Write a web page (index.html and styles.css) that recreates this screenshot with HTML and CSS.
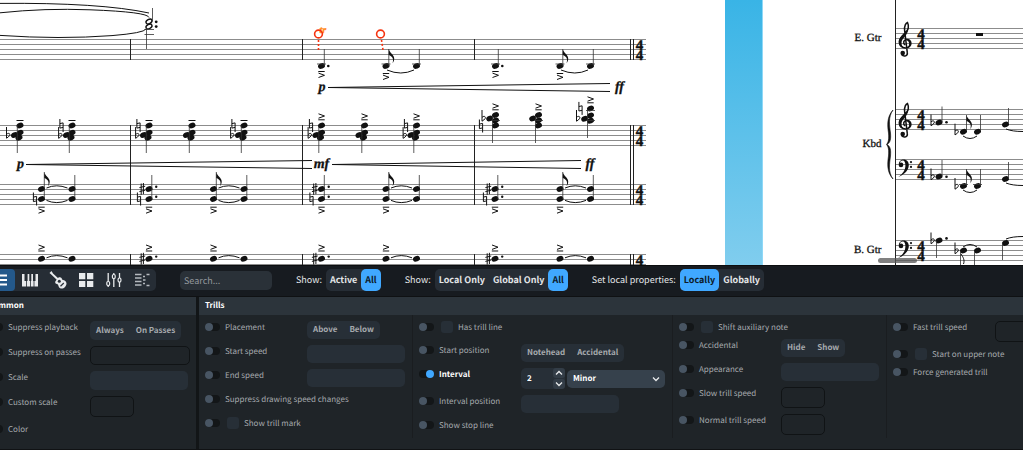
FILE: index.html
```html
<!DOCTYPE html>
<html lang="en">
<head>
<meta charset="UTF-8">
<title>Score – Properties</title>
<meta name="viewport" content="width=device-width,initial-scale=1.0">
<link rel="stylesheet" href="styles.css">
</head>
<body>

<!-- Score -->
<main class="score">
<svg class="music" viewBox="0 0 1023 265" preserveAspectRatio="xMinYMin slice" role="img" aria-label="Score">
  <defs>
    <linearGradient id="sky" x1="0" y1="0" x2="0" y2="1"><stop offset="0" stop-color="#39b4e6"/><stop offset="1" stop-color="#80cdee"/></linearGradient>
    <ellipse id="head" rx="3.6" ry="2.7" transform="rotate(-22)"/>
    <path id="flat" d="M-2-8V3.2M-2-.6C0-2.6 2-1.4 1.2.4C.6 1.6-.8 2.6-2 3.2" class="thin"/>
    <path id="natural" d="M-1.6-6.5V2.6L1.6 1.9M1.6 6.5V-2.6L-1.6-1.9" class="thin"/>
    <path id="sharp" d="M-1-5.5V5.8M1.2-6V5.2M-2.8-1.4L3-2.8M-2.8 2.6L3 1.2" class="thin"/>
    <path id="accent" d="M-3-2.2L3 0L-3 2.2M-3.2 3.8H3.2" class="thin"/>
    <path id="accentLow" d="M-3.2-3.8H3.2M-3-2.2L3 0L-3 2.2" class="thin"/>
    <path id="flag" d="M0 0C.6 4 5.4 5.5 5.4 9.5C5.4 11.5 4.6 13 3.8 14.2C5.2 9.5 3.4 7.2 0 6Z"/>
    <path id="staffL" d="M0 0H646M0 5H646M0 10H646M0 15H646M0 20H646" class="staff"/>
    <path id="staffR" d="M895 0H1023M895 5H1023M895 10H1023M895 15H1023M895 20H1023" class="staff"/>
    <g id="four"><text x="0" y="10">4</text><text x="0" y="20">4</text></g>
    <g id="treble">
      <path d="M3 26C5.5 28.8 9.4 27.4 8.8 24.2L6.2 2.6C5.4-3 7.6-5.6 9-6C10.6-2.6 9.8 1.2 7 4C3.6 7.4.8 9.4.8 13.4C.8 17.2 3.8 19.4 7 19.4C10.4 19.4 12.6 17.4 12.4 14.6C12.2 12 10 10.6 7.8 11C5 11.4 4.2 14.8 6.6 16.4" fill="none" stroke="#111" stroke-width="1.5"/>
      <path d="M7 4C3.6 7.4.4 9.4.4 13.8C1.2 17.4 3 19 5.2 19.2C2.6 17 2.4 13 4.4 10.5C6.4 7.7 9.8 4.6 10-.6C9.4 1.2 8.4 2.6 7 4ZM7 19.4C12 19.6 13.6 15 11.6 12.6C10.4 11 8.4 10.8 7.4 11.4C10.4 12 11.4 15 10.2 17.2C9.6 18.6 8.4 19.2 7 19.4Z"/>
      <circle cx="4.2" cy="24.6" r="2.3"/>
    </g>
    <g id="bass">
      <circle cx="3" cy="5.4" r="2.3"/>
      <path d="M.8 5C.8 1.8 3.2 0 5.6 0C9 0 11 2.6 10.8 6C10.4 11.6 5 15.8.2 17.6C4.4 14.4 7.4 11 7.4 6C7.4 3 6.6 1 4.8 1C3 1 1.8 2.2 1.8 4Z"/>
      <circle cx="13" cy="2.6" r="1.1"/><circle cx="13" cy="7.4" r="1.1"/>
    </g>
    <!-- three-note cluster hanging from the top line -->
    <g id="cluster">
      <use href="#head"/><use href="#head" y="7.2"/><use href="#head" x="-5.5" y="9.6"/><use href="#head" x="-1" y="12.2"/>
      <path d="M-2.7 0V27.5" class="stem"/>
    </g>
    <g id="acc"><use href="#natural" x="-10.5"/><use href="#flat" x="-11.4" y="9.6"/></g>
    <g id="dotted3">
      <use href="#head"/><use href="#head" y="10"/><path d="M2.8 10V-14" class="stem"/>
      <use href="#sharp" x="-6.8"/><use href="#natural" x="-10" y="10"/>
      <circle cx="7.2" cy="-2.2" r="1.2"/><circle cx="7.2" cy="7.8" r="1.2"/><use href="#accentLow" y="22"/>
    </g>
    <g id="tied3">
      <use href="#head"/><use href="#head" y="10"/><path d="M2.8 10V-17M33.3 10V-14" class="stem"/><use href="#flag" x="2.8" y="-17"/>
      <use href="#head" x="30.5"/><use href="#head" x="30.5" y="10"/>
      <path d="M5-1Q15-5.4 26-1M5 11.4Q15 15.8 26 11.4" class="tie"/><use href="#accentLow" y="22"/>
    </g>
    <g id="dotted4"><use href="#head"/><use href="#sharp" x="-6.8"/><circle cx="7.2" cy="-2.2" r="1.2"/><use href="#accent" y="-11.6"/></g>
    <g id="tied4"><use href="#head"/><use href="#head" x="30.5"/><path d="M5-1Q15-5.4 26-1" class="tie"/><use href="#accent" y="-11.6"/></g>
    <g id="dotted1"><use href="#head"/><path d="M-4.5-2H4.5M2.8 0V-17" class="stem"/><circle cx="6.8" cy="0" r="1.3"/><use href="#accentLow" y="9.3"/></g>
    <g id="tied1">
      <use href="#head"/><use href="#head" x="30.5"/><path d="M-4.5-2H4.5M26-2H35M2.8 0V-17M33.3 0V-17" class="stem"/>
      <use href="#flag" x="2.8" y="-17"/><path d="M1 4Q15 10 28 4" class="tie"/><use href="#accentLow" y="11.3"/>
    </g>
    <g id="leftCluster"><use href="#head"/><use href="#head" x="-5.8" y="3.4"/><use href="#head" y="5.4"/></g>
  </defs>

  <rect x="725" width="38" height="265" fill="url(#sky)"/>
  <path d="M762.5 0V265" stroke="#8ed8f7"/>

  <use href="#staffL" y="39.5"/><use href="#staffL" y="125.5"/><use href="#staffL" y="184.5"/><use href="#staffL" y="254.5"/>
  <path class="bar" d="M130.5 39V60M302.5 39V60M474.5 39V60M630.5 39V60M633.5 39V60
    M130.5 125V205M302.5 125V205M474.5 125V205M630.5 125V205M633.5 125V205
    M130.5 254V265M302.5 254V265M474.5 254V265M630.5 254V265M633.5 254V265"/>
  <g class="time"><use href="#four" x="639.5" y="39.5"/><use href="#four" x="639.5" y="125.5"/><use href="#four" x="639.5" y="184.5"/><use href="#four" x="639.5" y="254.5"/></g>

  <!-- top staff -->
  <path class="tie" d="M0 3.4Q100 2.5 149 13M0 12.8Q45 8 90 9.8Q148 12 149 17.5M0 35.4Q60 39.5 112 35.6Q144 33 146 29"/>
  <g fill="none" stroke="#111" stroke-width="1.4"><ellipse cx="149" cy="21.5" rx="3.2" ry="2" transform="rotate(-28 149 21.5)"/><ellipse cx="149" cy="26.5" rx="3.2" ry="2" transform="rotate(-28 149 26.5)"/></g>
  <path class="stem" d="M152.5 8V21M146.5 26V49M144.5 29.5H154M144.5 34.5H154"/>
  <circle cx="156.2" cy="21.8" r="1.4"/><circle cx="156.2" cy="26.6" r="1.4"/>
  <use href="#dotted1" x="321.5" y="66"/><use href="#tied1" x="386" y="66"/><use href="#dotted1" x="495.5" y="66"/><use href="#tied1" x="560" y="66"/>
  <path class="thin" d="M328 87.5L610 83.5M328 87.5L610 91.5M26 164.5L312 160.5M26 164.5L312 168.5M332 164.5L581 160.5M332 164.5L581 168.5"/>
  <g class="dyn"><text x="322" y="91">p</text><text x="619.5" y="91">ff</text><text x="20.5" y="168">p</text><text x="321.5" y="168">mf</text><text x="590" y="168">ff</text></g>
  <text class="tr" x="319.5" y="33">tr</text>
  <g class="trill"><circle cx="318.5" cy="34" r="3.9"/><circle cx="380.5" cy="34" r="3.9"/><path d="M318.5 40V50M381.5 40L383 50" stroke-dasharray="2 2"/></g>

  <!-- second staff -->
  <g><use href="#cluster" x="20" y="125.5"/><use href="#cluster" x="72" y="125.5"/><use href="#cluster" x="149" y="125.5"/><use href="#cluster" x="192" y="125.5"/><use href="#cluster" x="244" y="125.5"/><use href="#cluster" x="321.5" y="125.5"/><use href="#cluster" x="364.5" y="125.5"/><use href="#cluster" x="416.5" y="125.5"/></g>
  <g><use href="#flat" x="8.5" y="135"/><use href="#acc" x="72" y="125.5"/><use href="#acc" x="149" y="125.5"/><use href="#acc" x="244" y="125.5"/><use href="#acc" x="321.5" y="125.5"/><use href="#acc" x="416.5" y="125.5"/></g>
  <path class="thin" d="M16.5 120.5H23.5M68.5 120.5H75.5M145.5 120.5H152.5M188.5 120.5H195.5M240.5 120.5H247.5"/>
  <use href="#accent" x="321.5" y="116"/><use href="#accent" x="364.5" y="116"/><use href="#accent" x="416.5" y="116"/>
  <use href="#leftCluster" x="495.5" y="115"/><use href="#head" x="495.5" y="125.5"/><use href="#leftCluster" x="538.5" y="115"/><use href="#head" x="538.5" y="125.5"/><use href="#leftCluster" x="590.5" y="115.4"/><use href="#head" x="590.5" y="108.4"/>
  <path class="stem" d="M492.5 117V143M535.5 117V143M587.5 110V138M586 110.5H595M586 120.5H595M491 120.5H500M534 120.5H543"/>
  <use href="#flat" x="484" y="118"/><use href="#natural" x="481" y="126"/><use href="#flat" x="578.5" y="118"/><use href="#natural" x="580.5" y="108.4"/>
  <use href="#accent" x="495.5" y="106"/><use href="#accent" x="538.5" y="106"/><use href="#accent" x="590.5" y="99"/>

  <!-- lower staves -->
  <use href="#natural" x="35" y="199"/>
  <use href="#tied3" x="41.5" y="189"/><use href="#dotted3" x="149" y="189"/><use href="#tied3" x="213.5" y="189"/><use href="#dotted3" x="321.5" y="189"/><use href="#tied3" x="386" y="189"/><use href="#dotted3" x="495" y="189"/><use href="#tied3" x="560" y="189"/>
  <use href="#tied4" x="41.5" y="258.8"/><use href="#dotted4" x="149" y="258.8"/><use href="#tied4" x="213.5" y="258.8"/><use href="#dotted4" x="321.5" y="258.8"/><use href="#tied4" x="386" y="258.8"/><use href="#dotted4" x="495" y="258.8"/><use href="#tied4" x="560" y="258.8"/>

  <!-- next system -->
  <use href="#staffR" y="28.5"/><use href="#staffR" y="109.5"/><use href="#staffR" y="159.5"/><use href="#staffR" y="240.5"/>
  <path class="bar" d="M895.5 0V265"/>
  <use href="#treble" x="898.5" y="28.5"/><use href="#treble" x="898.5" y="109.5"/><use href="#bass" x="898" y="159.5"/><use href="#bass" x="898" y="240.5"/>
  <g class="time"><use href="#four" x="921" y="28.5"/><use href="#four" x="921" y="109.5"/><use href="#four" x="921" y="159.5"/><use href="#four" x="921" y="240.5"/></g>
  <path d="M893 110C888 117 889.5 125 890.5 133C891 139 890.5 142.5 887 144.5C890.5 146.5 891 150 890.5 156C889.5 164 888 172 893 179C886.5 172 887.5 163 888.5 156C889 150 888.5 147 886.5 144.5C888.5 142 889 139 888.5 133C887.5 126 886.5 117 893 110Z" stroke="#111" stroke-width=".6"/>
  <rect x="976" y="33" width="7" height="3"/>
  <g><use href="#head" x="939" y="122.5"/><use href="#head" x="963.5" y="131.7"/><use href="#head" x="977.5" y="131.7"/><use href="#head" x="1005.5" y="124.5"/>
  <use href="#head" x="939" y="176.5"/><use href="#head" x="963.5" y="186"/><use href="#head" x="977.5" y="186"/><use href="#head" x="1005.5" y="179"/>
  <use href="#head" x="939" y="240.5"/><use href="#head" x="963.5" y="250.5"/><use href="#head" x="977.5" y="250.5"/><use href="#head" x="1005.5" y="243"/></g>
  <g><use href="#flat" x="933" y="122.5"/><use href="#flat" x="957" y="131.7"/><use href="#flat" x="933" y="176.5"/><use href="#flat" x="957" y="186"/><use href="#flat" x="933" y="240.5"/><use href="#flat" x="957" y="250.5"/></g>
  <circle cx="946.5" cy="122.3" r="1.3"/><circle cx="946.5" cy="176.7" r="1.3"/><circle cx="946.5" cy="238.4" r="1.3"/>
  <path class="stem" d="M942 122V106.5M966.5 131V115M980.5 131V115M1008.5 124V108M942 176V160M966.5 186V169M980.5 186V169M1008.5 179V162M936.5 241V258M960.5 251V265M974.5 251V265M1002.5 243V260M959 184.5H968M973 184.5H982"/>
  <use href="#flag" x="966.5" y="115"/><use href="#flag" x="966.5" y="169"/><path class="tie" d="M961 254C963 257 965 260 963.5 264"/>
  <path class="tie" d="M963 136Q970 141 977 136M963 190Q970 195 977 190M963 247Q970 242 977 247M1006 129Q1012 131.5 1023 131.5M1006 183Q1012 185.5 1023 185.5M1006 239Q1012 236.5 1023 236.5"/>
  <g class="player"><text x="881.5" y="41">E. Gtr</text><text x="881.5" y="147">Kbd</text><text x="881.5" y="253">B. Gtr</text></g>
  <rect x="878" y="258" width="39" height="5" rx="2.5" fill="#555" fill-opacity=".75"/>
</svg>
</main>

<!-- Properties panel -->
<section class="panel">
  <div class="toolbar">
    <div class="group tools">
      <button class="tool on" aria-label="Properties"><svg viewBox="0 0 16 16"><path d="M0 3.5H14M0 8H14M0 12.5H14" stroke="#fff" stroke-width="1.8"/></svg></button>
      <button class="tool" aria-label="Keyboard"><svg viewBox="0 0 16 16"><path d="M0 2H2.5V9H4V14.5H0ZM4.8 9H5.6V2H7.3V9H8V14.5H4.8ZM8.8 9H9.3V2H11V9H11.6V14.5H8.8ZM12.4 9H13.5V2H16V14.5H12.4Z"/></svg></button>
      <button class="tool" aria-label="Fretboard"><svg class="large" viewBox="0 0 18 18"><path d="M.5 2L2.5 0L4 2.6L10 8L8.5 9.5L2.8 4Z"/><path d="M9.5 6.5C11.5 5.5 13.2 6.8 13 8.6C14.5 9.2 17 9.6 17.5 12.4C17.5 15.2 14.5 18 12 17.4C9.3 16.8 9.8 14.4 8.6 13.2C6.5 13 5.3 11.2 7 9.5Z"/><circle cx="10.3" cy="10.3" r="1.5" fill="#262d35"/><path d="M11.5 15.2L14.8 12" stroke="#262d35" stroke-width="1.2"/></svg></button>
      <button class="tool" aria-label="Drum pads"><svg viewBox="0 0 16 16"><path d="M1 1H7.3V7.2H1ZM9 1H15.3V7.2H9ZM1 8.9H7.3V15.1H1ZM9 8.9H15.3V15.1H9Z"/></svg></button>
      <button class="tool" aria-label="Mixer"><svg viewBox="0 0 16 16"><path d="M2.2 1V15M7.8 1V15M13.5 1V15" stroke="#e8eaec" stroke-width="1.3"/><g fill="#262d35" stroke="#e8eaec" stroke-width="1.2"><rect x=".8" y="9.5" width="2.8" height="4" rx="1.3"/><rect x="6.4" y="2.5" width="2.8" height="4" rx="1.3"/><rect x="12.1" y="6" width="2.8" height="4" rx="1.3"/></g></svg></button>
      <button class="tool" aria-label="Key editor"><svg viewBox="0 0 16 16"><path d="M1 2.5H7.5M1 6H7.5M1 9.5H7.5M1 13H7.5M9 4.5H11M12.5 2.5H15.5M9 8H11.5M9 11.5H11M12.5 13.5H15.5" stroke="#b4b9be" stroke-width="1.5"/></svg></button>
    </div>
    <input class="search" type="search" placeholder="Search..." aria-label="Search">
    <span class="caption">Show:</span>
    <div class="group"><button>Active</button><button class="on">All</button></div>
    <span class="caption">Show:</span>
    <div class="group"><button>Local Only</button><button>Global Only</button><button class="on">All</button></div>
    <span class="caption">Set local properties:</span>
    <div class="group"><button class="on">Locally</button><button>Globally</button></div>
  </div>

  <div class="sections">
    <section class="common">
      <h2>Common</h2>
      <div class="columns">
        <div class="column">
          <div class="row"><div class="name"><input class="toggle" type="checkbox" id="c1"><label for="c1">Suppress playback</label></div><div class="choice"><button>Always</button><button>On Passes</button></div></div>
          <div class="row"><div class="name"><input class="toggle" type="checkbox" id="c2"><label for="c2">Suppress on passes</label></div><input class="entry wide" type="text" aria-label="Passes"></div>
          <div class="row"><div class="name"><input class="toggle" type="checkbox" id="c3"><label for="c3">Scale</label></div><select class="drop" aria-label="Scale value"><option></option></select></div>
          <div class="row"><div class="name"><input class="toggle" type="checkbox" id="c4"><label for="c4">Custom scale</label></div><input class="entry" type="text" aria-label="Custom scale value"></div>
          <div class="row"><div class="name"><input class="toggle" type="checkbox" id="c5"><label for="c5">Color</label></div></div>
        </div>
      </div>
    </section>

    <section class="trills">
      <h2>Trills</h2>
      <div class="columns">
        <div class="column">
          <div class="row"><div class="name"><input class="toggle" type="checkbox" id="t1"><label for="t1">Placement</label></div><div class="choice"><button>Above</button><button>Below</button></div></div>
          <div class="row"><div class="name"><input class="toggle" type="checkbox" id="t2"><label for="t2">Start speed</label></div><select class="drop" aria-label="Start speed value"><option></option></select></div>
          <div class="row"><div class="name"><input class="toggle" type="checkbox" id="t3"><label for="t3">End speed</label></div><select class="drop" aria-label="End speed value"><option></option></select></div>
          <div class="row blank"><div class="name"><input class="toggle" type="checkbox" id="t4"><label for="t4">Suppress drawing speed changes</label></div></div>
          <div class="row"><div class="name"><input class="toggle" type="checkbox" aria-label="Set show trill mark"><input class="box" type="checkbox" id="t5"><label for="t5">Show trill mark</label></div></div>
        </div>
        <div class="column">
          <div class="row spaced"><div class="name"><input class="toggle" type="checkbox" aria-label="Set has trill line"><input class="box" type="checkbox" id="t6"><label for="t6">Has trill line</label></div></div>
          <div class="row"><div class="name"><input class="toggle" type="checkbox" id="t7"><label for="t7">Start position</label></div><div class="choice"><button>Notehead</button><button>Accidental</button></div></div>
          <div class="row active"><div class="name"><input class="toggle" type="checkbox" id="t8" checked><label for="t8">Interval</label></div>
            <div class="interval">
              <div class="spinner"><input type="text" value="2" aria-label="Interval size"><div class="steps"><button aria-label="Up"><svg viewBox="0 0 10 8"><path d="M2 5.5L5 2.5L8 5.5"/></svg></button><button aria-label="Down"><svg viewBox="0 0 10 8"><path d="M2 2.5L5 5.5L8 2.5"/></svg></button></div></div>
              <div class="picker"><select class="drop" aria-label="Interval quality"><option>Minor</option></select><svg viewBox="0 0 10 8"><path d="M2 2.5L5 5.5L8 2.5"/></svg></div>
            </div>
          </div>
          <div class="row"><div class="name"><input class="toggle" type="checkbox" id="t9"><label for="t9">Interval position</label></div><select class="drop" aria-label="Interval position value"><option></option></select></div>
          <div class="row"><div class="name"><input class="toggle" type="checkbox" id="t10"><label for="t10">Show stop line</label></div></div>
        </div>
        <div class="column">
          <div class="row"><div class="name"><input class="toggle" type="checkbox" aria-label="Set shift auxiliary note"><input class="box" type="checkbox" id="t11"><label for="t11">Shift auxiliary note</label></div></div>
          <div class="row"><div class="name"><input class="toggle" type="checkbox" id="t12"><label for="t12">Accidental</label></div><div class="choice"><button>Hide</button><button>Show</button></div></div>
          <div class="row"><div class="name"><input class="toggle" type="checkbox" id="t13"><label for="t13">Appearance</label></div><select class="drop" aria-label="Appearance value"><option></option></select></div>
          <div class="row"><div class="name"><input class="toggle" type="checkbox" id="t14"><label for="t14">Slow trill speed</label></div><input class="entry" type="text" aria-label="Slow trill speed value"></div>
          <div class="row"><div class="name"><input class="toggle" type="checkbox" id="t15"><label for="t15">Normal trill speed</label></div><input class="entry" type="text" aria-label="Normal trill speed value"></div>
        </div>
        <div class="column">
          <div class="row"><div class="name"><input class="toggle" type="checkbox" id="t16"><label for="t16">Fast trill speed</label></div><input class="entry" type="text" aria-label="Fast trill speed value"></div>
          <div class="row"><div class="name"><input class="toggle" type="checkbox" aria-label="Set start on upper note"><input class="box" type="checkbox" id="t17"><label for="t17">Start on upper note</label></div></div>
          <div class="row"><div class="name"><input class="toggle" type="checkbox" id="t18"><label for="t18">Force generated trill</label></div></div>
        </div>
      </div>
    </section>
  </div>
</section>

</body>
</html>
```
FILE: styles.css
```css
*{box-sizing:border-box}
body{margin:0;height:100vh;display:flex;flex-direction:column;overflow:hidden;background:#fff;font:8px/12px "Noto Sans CJK SC","Noto Sans",sans-serif;color:#e4e6e8;text-rendering:geometricPrecision}
button,input,select{font:inherit;color:inherit;border:none;margin:0;padding:0;appearance:none;background:none;outline:none;text-rendering:inherit}
button{cursor:pointer;font-weight:bold;white-space:nowrap}

/* ---------- score ---------- */
.score{flex:1;min-height:0;overflow:hidden}
.music{display:block;width:100%;height:100%;fill:#111}
.staff{fill:none;stroke:#8c8c8c;stroke-width:1}
.bar{fill:none;stroke:#222;stroke-width:1}
.stem{fill:none;stroke:#333;stroke-width:.8}
.thin{fill:none;stroke:#111;stroke-width:1}
.tie{fill:none;stroke:#111;stroke-width:1}
.time{font:bold 15px "Liberation Serif",serif;text-anchor:middle;stroke:#111;stroke-width:.4}
.dyn{font:italic bold 14px "Liberation Serif",serif;text-anchor:middle;stroke:#111;stroke-width:.3}
.player{font:11px "Liberation Serif",serif;text-anchor:end;stroke:#111;stroke-width:.3}
.trill{fill:none;stroke:#f5330f;stroke-width:1.6}
.tr{font:italic bold 10px "Liberation Serif",serif;fill:#ff8a1c;stroke:#ff8a1c;stroke-width:.4}

/* ---------- toolbar ---------- */
.panel{margin-left:-18px;background:#1f2428;border-top:1px solid #0c0e10;border-bottom:1px solid #101214}
.toolbar{display:flex;align-items:center;height:31px;padding:0 0 2px 5px;background:#171b20;white-space:nowrap;border-bottom:1px solid #0f1113;font-size:9px}
.group{display:flex;height:22px;border-radius:5px;background:#262d35}
.group button{padding:0 4px;border-radius:5px}
.group .on{background:#40a8ff;color:#0d1a28}
.tools .tool{flex:none;width:28px;padding:0;display:grid;place-items:center;border-radius:0}
.tools .on{margin-right:1px;background:#24598b;border-radius:0 4px 4px 0}
.tool svg{width:16px;height:16px;fill:#e8eaec}
.tool .large{width:18px;height:18px}
.search{width:92px;height:19px;margin-left:24px;padding:0 4px;border-radius:5px;background:#2a3138}
.search::placeholder{color:#92979c}
.caption{margin:0 4px 0 24px}

/* ---------- sections ---------- */
.sections{display:flex;overflow:hidden}
.sections h2{margin:0;padding:0 6px;font-size:8px;line-height:18px;background:#2c343b;color:#fff}
.common{flex:none;width:217px;border-right:3px solid #121517}
.trills{flex:1;min-width:0;overflow:hidden}
.columns{display:flex;padding-bottom:11px}
.column{flex:none;display:flex;flex-direction:column;gap:6px;padding:6px 7px 3px 6px;border-right:1px solid #1a1d20;color:#a6aaae}
.column:last-child{border-right:none}
.row{display:flex;align-items:flex-start}
.name{flex:none;display:flex;align-items:center;width:102px;height:12px;white-space:nowrap}
.name label{padding-top:2px}
.blank{height:18px}
.spaced{height:17px}
.toggle{flex:none;width:15px;height:8px;margin-right:5px;border-radius:4px;background:#131618}
.toggle::before{content:"";display:block;width:8px;height:8px;border-radius:50%;background:#485563}
.toggle:checked::before{margin-left:7px;background:#40a8ff}
.box{flex:none;width:12px;height:12px;margin:0 5px 0 2px;border-radius:3px;background:#272f37}
.active{color:#fff;font-weight:bold}
.choice{display:flex;height:18px;border-radius:5px;background:#272f37}
.choice button{padding:0 6px}
.drop{width:98px;height:18px;border-radius:5px;background:#272f37}
.entry{width:44px;height:21px;border:1px solid #101315;border-radius:5px}
.wide{width:100px;height:19px}
.common .choice,.common .drop{height:19px}
.interval{display:flex;align-items:center;gap:2px}
.spinner{display:flex;width:44px;height:21px;border-radius:5px;background:#272f37}
.spinner input{width:32px;padding-left:6px}
.steps{display:flex;flex-direction:column;gap:1px;width:12px}
.steps button{flex:1;display:grid;place-items:center;border-radius:3px;background:#333d47}
.interval svg{width:10px;height:8px;fill:none;stroke:#e8eaec;stroke-width:1.3}
.picker{position:relative}
.picker .drop{padding-left:6px;background:#36414c}
.picker svg{position:absolute;right:4px;top:5px;pointer-events:none}
```
